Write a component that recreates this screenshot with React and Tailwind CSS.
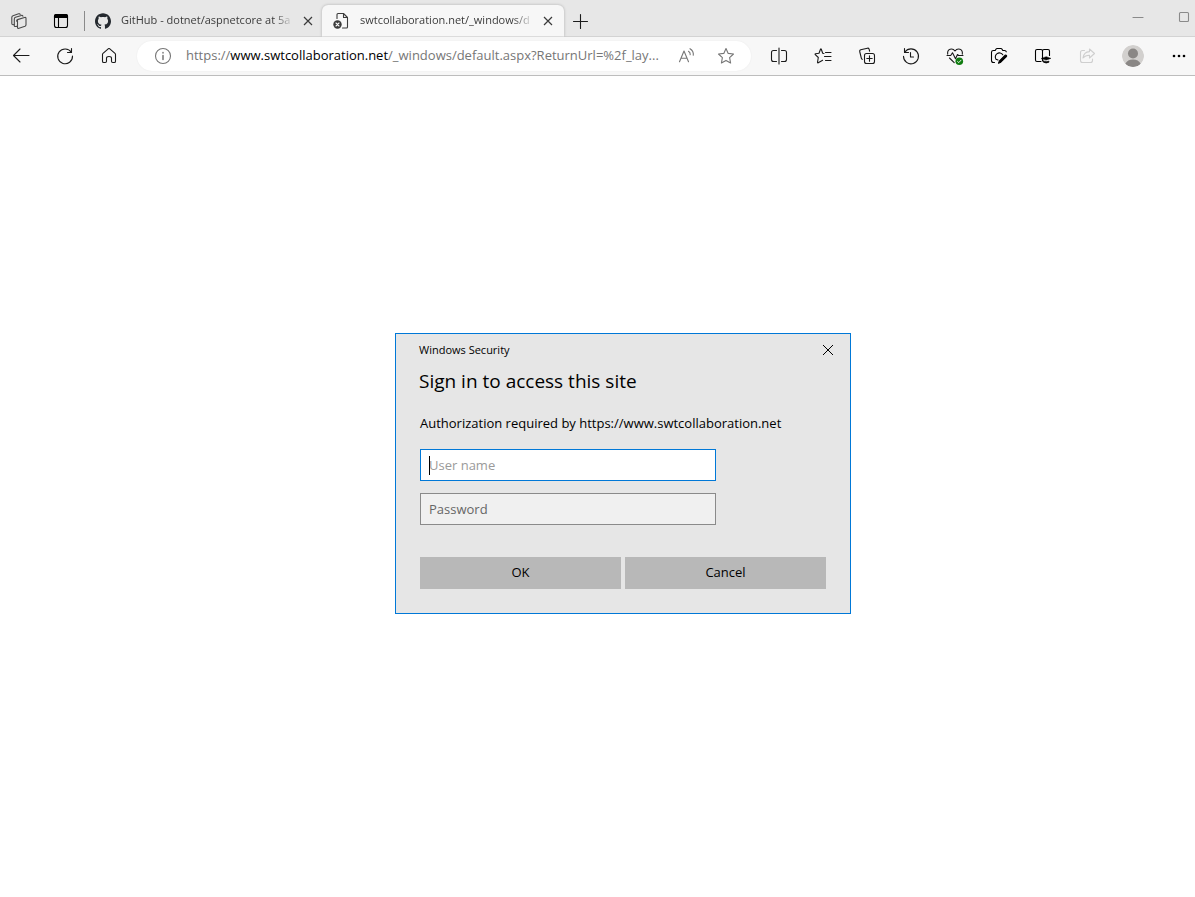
import React from "react";
import { SiGithub } from "react-icons/si";

function Icon({ children, className = "text-[#1b1b1b]" }) {
  return (
    <svg
      width="20"
      height="20"
      viewBox="0 0 20 20"
      fill="none"
      stroke="currentColor"
      strokeWidth="1.1"
      strokeLinecap="round"
      strokeLinejoin="round"
      aria-hidden="true"
      className={`shrink-0 ${className}`}
    >
      {children}
    </svg>
  );
}

const STAR = "M10 2.5l2.2 4.9 5.3.6-3.9 3.6 1 5.4L10 14.4 5.4 17l1-5.4L2.5 8l5.3-.6z";

function ToolButton({ label, disabled, className = "w-10", children }) {
  return (
    <button
      type="button"
      aria-label={label}
      disabled={disabled}
      className={`flex h-8 shrink-0 items-center justify-center ${className}`}
    >
      {children}
    </button>
  );
}

function CloseGlyph({ className = "text-[#3b3b3b]" }) {
  return (
    <svg width="10" height="10" viewBox="0 0 10 10" stroke="currentColor" strokeWidth="1.2" aria-hidden="true" className={className}>
      <path d="M1 1l8 8M9 1L1 9" />
    </svg>
  );
}

function TabStrip() {
  return (
    <header className="flex h-[37px] items-end border-b border-[#d3d3d3] bg-[#e7e7e7] text-[11px] text-[#3b3b3b]">
      <div className="flex h-[31px] flex-1 items-center">
        <button type="button" aria-label="Workspaces" className="flex w-10 justify-center pr-[2px]">
          <Icon className="text-[#4a4a4a]">
            <path d="M8.5 8.6l7-2.1q1.5-.4 1.5 1v6.3q0 1-1 1.400l-6 2.100q-1.500.500-1.500-1zM8.500 8.600q-.9.300-.9 1.500" />
            <path d="M8 15.400l-1.600.1q-1.100.1-1.100-1.100V8q0-1.300 1.200-1.700l5.900-1.900q1.400-.4 1.500.9" />
            <path d="M5 13.600l-1 .1q-1.200 0-1.200-1.100V6.400q0-1.200 1.200-1.600l5.600-2q1.300-.4 1.600.7" />
          </Icon>
        </button>
        <button type="button" aria-label="Tab actions" className="flex w-10 justify-center pl-[2px]">
          <Icon className="text-black">
            <rect x="3.5" y="3.5" width="13" height="13" rx="2" />
            <path d="M3.5 6.5V5q0-1.5 1.5-1.5h10q1.5 0 1.5 1.5v1.5z" fill="currentColor" />
            <path d="M7.5 7v9" />
          </Icon>
        </button>
        <span className="ml-1 h-5 w-px bg-[#8a8a8a]" />
        <div className="flex h-8 w-[237px] items-center pl-[10px] pr-1">
          <SiGithub size={16} color="#24292f" className="shrink-0" aria-hidden="true" />
          <a href="#github" className="ml-[10px] flex-1 whitespace-nowrap [mask-image:linear-gradient(to_right,black_88%,transparent)]">
            GitHub - dotnet/aspnetcore at 5a
          </a>
          <button type="button" aria-label="Close tab" className="ml-1 flex size-5 items-center justify-center">
            <CloseGlyph />
          </button>
        </div>
        <div className="flex h-8 w-[242px] items-center rounded-t-md bg-[#f7f7f7] pl-[9px] pr-[6px] shadow-[0_0_3px_rgba(0,0,0,0.25)] [clip-path:inset(-4px_-4px_0_-4px)]">
          <Icon className="text-[#3b3b3b]">
            <path d="M6 7.5V3.5Q6 2.5 7 2.5h5.5l4 4v9.5q0 1-1 1H11.5M12.5 2.5v4h4" />
            <circle cx="6.5" cy="13.5" r="4.2" fill="currentColor" stroke="none" />
            <path d="M5 12l3 3M8 12l-3 3" stroke="#f7f7f7" />
          </Icon>
          <a href="#swt" className="ml-[9px] flex-1 whitespace-nowrap [mask-image:linear-gradient(to_right,black_88%,transparent)]">
            swtcollaboration.net/_windows/d
          </a>
          <button type="button" aria-label="Close tab" className="ml-1 flex size-5 items-center justify-center">
            <CloseGlyph />
          </button>
        </div>
        <button type="button" aria-label="New tab" className="flex w-8 justify-center">
          <Icon>
            <path d="M10.5 3.5v14M3.5 10.5h14" />
          </Icon>
        </button>
      </div>
      <div className="flex self-start pt-[7px]">
        <button type="button" aria-label="Minimize" className="flex w-12 justify-center pl-[2px]">
          <Icon className="text-[#8a8a8a]">
            <path d="M5 10.5h10" />
          </Icon>
        </button>
        <button type="button" aria-label="Maximize" className="flex w-[34px] justify-end pr-px">
          <Icon className="text-[#8a8a8a]">
            <rect x="5.5" y="5.5" width="9" height="9" rx="1" />
          </Icon>
        </button>
      </div>
    </header>
  );
}

function AddressBar() {
  return (
    <div className="mx-2 flex h-[30px] min-w-0 flex-1 items-center rounded-full bg-white pl-4 pr-[15px] shadow-[0_0_2px_rgba(0,0,0,0.06)]">
      <button type="button" aria-label="View site information">
        <Icon className="text-[#767676]">
          <circle cx="10" cy="10" r="7.5" />
          <path d="M10 9.5v4M10 6.600v.4" strokeWidth="1.5" />
        </Icon>
      </button>
      <p className="ml-[13px] min-w-0 flex-1 whitespace-nowrap text-[13px] text-[#767676]">
        https://<span className="text-black">www.swtcollaboration.net</span>/_windows/default.aspx?ReturnUrl=%2f_lay...
      </p>
      <button type="button" aria-label="Read aloud" className="ml-[10px]">
        <Icon className="text-[#767676]">
          <path d="M3.5 15.8L8 5l4.5 10.8M5 12.300h6M12.500 5.300q2 1.200 1.700 3.400M14 2.700q3.800 2.200 3.300 6.600" />
        </Icon>
      </button>
      <button type="button" aria-label="Add to favorites" className="ml-5">
        <Icon className="text-[#767676]">
          <path d={STAR} />
        </Icon>
      </button>
    </div>
  );
}

function Toolbar() {
  return (
    <nav className="flex h-[39px] items-center border-b border-[#bdbdbd] bg-[#f7f7f7] pl-px">
      <div className="flex gap-1">
        <ToolButton label="Back">
          <Icon><path d="M18 9.5H2.5M9 3L2.5 9.5 9 16" /></Icon>
        </ToolButton>
        <ToolButton label="Refresh">
          <Icon><path d="M16.5 2.5v4h-4M16.3 6.3A7.4 7.4 0 1 0 17.5 10" /></Icon>
        </ToolButton>
        <ToolButton label="Home">
          <Icon><path d="M3.5 8.5q0-.7.5-1.2l5.2-4.5q.8-.6 1.6 0L16 7.3q.5.5.5 1.2v6.7q0 1.3-1.2 1.3h-1.6q-1.2 0-1.2-1.2v-3.1q0-1.7-2.5-1.7t-2.5 1.7v3.100q0 1.200-1.200 1.200H4.700q-1.200 0-1.200-1.300z" /></Icon>
        </ToolButton>
      </div>
      <AddressBar />
      <div className="flex items-center gap-1">
        <ToolButton label="Split screen">
          <Icon>
            <path d="M10 2v16" />
            <path d="M7.5 4.5h-3q-2 0-2 2v7q0 2 2 2h3M12.5 4.5h3q2 0 2 2v7q0 2-2 2h-3" />
          </Icon>
        </ToolButton>
        <ToolButton label="Favorites">
          <Icon>
            <path d="M11 7.5L9.7 7.3 8.3 3.2q-.4-.8-.8 0L6 7.3l-3.5.5q-.8.2-.2.8l3 2.9-.8 4.8q0 .9.7.5l3.6-2.1.8-.4M12.5 6.5H18M11.500 10.500H18M12.500 14.500H18" />
          </Icon>
        </ToolButton>
        <ToolButton label="Collections">
          <Icon>
            <rect x="7.5" y="7.5" width="10" height="10" rx="2" />
            <path d="M12.5 9.8v5.4M9.8 12.5h5.4" />
            <path d="M5.5 13.3q-.9-.1-1.1-1L2.7 5.5q-.3-1.3 1-1.7l6.7-1.6q1.3-.3 1.7 1l.5 2" />
          </Icon>
        </ToolButton>
        <ToolButton label="History">
          <Icon>
            <path d="M3.5 2.5v4h4M3.9 6A7.5 7.5 0 1 1 2.5 10.3M9.5 6.5v4.500h3" />
          </Icon>
        </ToolButton>
        <ToolButton label="Browser essentials">
          <Icon>
            <path d="M2.7 8.2C1.9 2.7 7.5 1.6 10 5c2.5-3.4 8.1-2.3 7.3 3.2M4.5 12l4.700 4.700M2 9.500h3.700l1.800-2.700 3 6 2-4.300 1 1H18" />
            <circle cx="14.3" cy="15.3" r="3.8" fill="#107c10" stroke="none" />
            <path d="M12.6 15.5l1.2 1.1 2.2-2.4" stroke="#fff" strokeWidth="0.9" />
          </Icon>
        </ToolButton>
        <ToolButton label="Web capture">
          <Icon className="text-black">
            <path d="M5.5 16.5h-1q-2 0-2-2V6.3q0-1.8 2-1.8h1.700l.9-1.500q.3-.5 1-.5h3.800q.7 0 1 .5l.9 1.500h1.700q1.500 0 1.800 1.300" />
            <path d="M7 13.3A4.1 4.1 0 1 1 13.8 8.7M7 13.3L9 14" />
            <path d="M9.5 17.3l1-2.5 5.7-5.6q.6-.5 1.200.1.600.600 0 1.300l-5.600 5.600z" fill="currentColor" />
          </Icon>
        </ToolButton>
        <ToolButton label="Immersive reader">
          <Icon className="text-black">
            <path d="M9.5 15V5q0-1.500-1.500-1.500H4Q2.500 3.500 2.500 5v9q0 1.500 1.500 1.500h4M9.500 5q0-1.500 1.500-1.500h4q1.500 0 1.500 1.500v4.500" />
            <path d="M8.500 12.400l4.700-1.700 4.700 1.700-4.700 1.600z" fill="currentColor" strokeWidth="0.500" />
            <path d="M10.500 15.200v1q2.700 1.500 5.400 0v-1q-2.700 1.200-5.400 0z" fill="currentColor" strokeWidth="0.800" />
          </Icon>
        </ToolButton>
        <ToolButton label="Share" disabled>
          <Icon className="text-[#cfcfcf]">
            <path d="M7.5 4.5h-2q-2 0-2 2v8q0 2 2 2h8q2 0 2-2V13" />
            <path d="M12.5 3v2.6c-4 .2-6 2.3-6.5 6.4 1.8-2.2 3.6-2.9 6.5-2.8V12L17.5 7.5z" />
          </Icon>
        </ToolButton>
        <ToolButton label="Profile" className="w-11">
          <svg width="22" height="22" viewBox="0 0 22 22" aria-hidden="true" className="rounded-full">
            <circle cx="11" cy="11" r="11" fill="#d2d0ce" />
            <circle cx="11" cy="8.5" r="5" fill="#8a8785" />
            <path d="M3.3 18.8Q5.5 14.5 11 14.5t7.7 4.3Q15.5 22 11 22t-7.7-3.2z" fill="#8a8785" />
          </svg>
        </ToolButton>
        <ToolButton label="Settings and more" className="w-9 pl-1">
          <Icon className="text-black">
            <g fill="currentColor" stroke="none">
              <circle cx="5" cy="10" r="1.3" />
              <circle cx="10" cy="10" r="1.3" />
              <circle cx="15" cy="10" r="1.3" />
            </g>
          </Icon>
        </ToolButton>
      </div>
    </nav>
  );
}

function SignInDialog() {
  return (
    <section role="dialog" aria-labelledby="dialog-title" className="w-[456px] border border-[#0078d7] bg-[#e6e6e6] text-black">
      <div className="flex h-8 items-center justify-between pl-[23px] pr-3">
        <span className="text-[11px]">Windows Security</span>
        <button type="button" aria-label="Close" className="flex size-5 items-center justify-center">
          <svg width="12" height="12" viewBox="0 0 12 12" stroke="#000" aria-hidden="true">
            <path d="M1 1l10 10M11 1L1 11" />
          </svg>
        </button>
      </div>
      <h1 id="dialog-title" className="pl-[23px] text-[19px] leading-[30px]">Sign in to access this site</h1>
      <form className="px-6 pb-6" onSubmit={(event) => event.preventDefault()}>
        <p className="pt-[17px] text-[13px] leading-5">Authorization required by https://www.swtcollaboration.net</p>
        <div className="mt-4 flex w-[296px] flex-col gap-3">
          <div className="relative">
            <input
              type="text"
              aria-label="User name"
              placeholder="User name"
              className="block h-8 w-full border border-[#0078d7] bg-white px-2 text-[13px] outline-none placeholder:text-[#9a9a9a]"
            />
            <span className="absolute left-[9px] top-[7px] h-[19px] w-px bg-black" />
          </div>
          <input
            type="password"
            aria-label="Password"
            placeholder="Password"
            className="block h-8 w-full border border-[#8a8a8a] bg-[#f0f0f0] px-2 text-[13px] outline-none placeholder:text-[#666666]"
          />
        </div>
        <div className="mt-8 grid grid-cols-2 gap-1 text-[13px]">
          <button type="submit" className="h-8 bg-[#b8b8b8]">OK</button>
          <button type="button" className="h-8 bg-[#b8b8b8]">Cancel</button>
        </div>
      </form>
    </section>
  );
}

export default function App() {
  return (
    <div className="flex min-h-screen flex-col bg-white font-['Open_Sans','Noto_Sans',sans-serif]">
      <TabStrip />
      <Toolbar />
      <main className="flex flex-1 items-start justify-center pl-[51px] pt-[257px]">
        <SignInDialog />
      </main>
    </div>
  );
}
